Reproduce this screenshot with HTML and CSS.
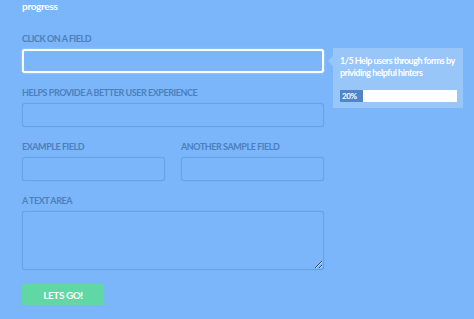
FILE: index.html
```html
<!DOCTYPE html>
<html>
<head>
<meta charset="utf-8">
<link rel="stylesheet" href="styles.css">
</head>
<body>
<div class="page">
  <div class="title">progress</div>
  <form class="form">
    <div class="group">
      <label class="label">CLICK ON A FIELD</label>
      <input class="field focused" type="text">
    </div>
    <div class="group">
      <label class="label">HELPS PROVIDE A BETTER USER EXPERIENCE</label>
      <input class="field" type="text">
    </div>
    <div class="row">
      <div class="group">
        <label class="label">EXAMPLE FIELD</label>
        <input class="field" type="text">
      </div>
      <div class="group">
        <label class="label">ANOTHER SAMPLE FIELD</label>
        <input class="field" type="text">
      </div>
    </div>
    <div class="group">
      <label class="label">A TEXT AREA</label>
      <textarea class="field area"></textarea>
    </div>
    <button class="btn" type="button">LETS GO!</button>
  </form>
  <div class="hint">
    <div class="hint-text">1/5 Help users through forms by prividing helpful hinters</div>
    <div class="bar"><div class="bar-fill" style="width:20%">20%</div></div>
  </div>
</div>
</body>
</html>
```
FILE: styles.css
```css
* { box-sizing: border-box; }
html, body { margin: 0; padding: 0; }
body {
  background: #7ab6f9;
  font-family: Lato, "Open Sans", sans-serif;
  width: 474px;
  height: 319px;
  overflow: hidden;
}
.page {
  position: relative;
  padding: 0 0 0 22px;
}
.title {
  color: #ffffff;
  font-weight: 700;
  font-size: 10px;
  line-height: 12px;
  height: 12px;
  letter-spacing: -0.3px;
}
.form {
  width: 302px;
  margin-top: 21px;
}
.group {
  display: flex;
  flex-direction: column;
  margin-bottom: 14px;
}
.label {
  color: #4d7fbc;
  font-weight: 700;
  font-size: 9px;
  line-height: 11px;
  height: 11px;
  margin-bottom: 5px;
  letter-spacing: -0.45px;
  white-space: nowrap;
}
.field {
  height: 24px;
  width: 100%;
  background: #7ab6f9;
  border: 1px solid #68a3e6;
  border-radius: 3px;
  box-shadow: 0 0 1px rgba(60, 120, 190, 0.35);
  outline: none;
  margin: 0;
  font-family: inherit;
}
.field.focused {
  border: 2px solid #ffffff;
  box-shadow: 0 0 2px rgba(255, 255, 255, 0.6);
}
.row {
  display: grid;
  grid-template-columns: 143px 143px;
  column-gap: 16px;
}
.area {
  height: 59px;
  resize: vertical;
  display: block;
}
.btn {
  display: block;
  margin-top: 2px;
  width: 82px;
  height: 21px;
  background: #5fd8a6;
  color: #ffffff;
  border: none;
  border-radius: 2px;
  font-family: inherit;
  font-weight: 700;
  font-size: 10px;
  letter-spacing: -0.45px;
  box-shadow: 0 0 2px rgba(95, 216, 166, 0.7);
  padding: 0;
}
.hint {
  position: absolute;
  left: 333px;
  top: 48px;
  width: 130px;
  height: 60px;
  background: #98c6f9;
  padding: 7px 5px 0 7px;
}
.hint::before {
  content: "";
  position: absolute;
  left: -5px;
  top: 8px;
  border-top: 5px solid transparent;
  border-bottom: 5px solid transparent;
  border-right: 5px solid #98c6f9;
}
.hint-text {
  color: #ffffff;
  font-weight: 700;
  font-size: 9px;
  line-height: 12px;
  letter-spacing: -0.5px;
}
.bar {
  margin-top: 11px;
  margin-right: 1px;
  height: 12px;
  background: #ffffff;
}
.bar-fill {
  height: 12px;
  background: #4f86c9;
  color: #ffffff;
  font-weight: 700;
  font-size: 8px;
  line-height: 12px;
  padding-left: 2px;
  letter-spacing: -0.4px;
}
```
